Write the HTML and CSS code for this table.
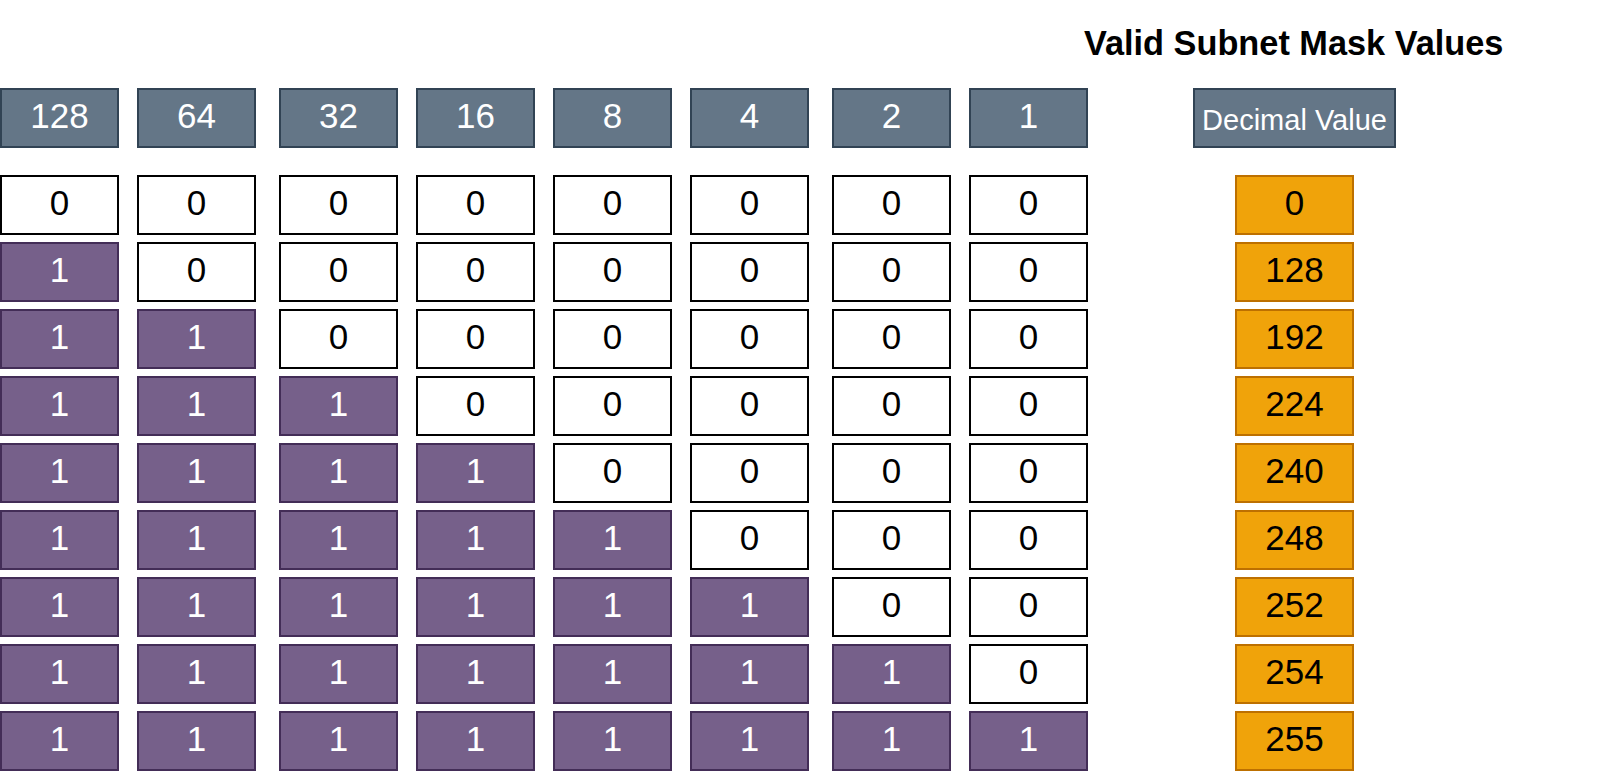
FILE: index.html
```html
<!DOCTYPE html>
<html lang="en">
<head>
<meta charset="utf-8">
<title>Valid Subnet Mask Values</title>
<link rel="stylesheet" href="styles.css">
</head>
<body>
<div class="page">
  <h1 class="title">Valid Subnet Mask Values</h1>
  <div class="grid">
    <div class="cell hdr">128</div>
    <div class="cell hdr">64</div>
    <div class="cell hdr">32</div>
    <div class="cell hdr">16</div>
    <div class="cell hdr">8</div>
    <div class="cell hdr">4</div>
    <div class="cell hdr">2</div>
    <div class="cell hdr">1</div>
    <div class="cell hdr dec-hdr">Decimal Value</div>

    <div class="cell zero">0</div><div class="cell zero">0</div><div class="cell zero">0</div><div class="cell zero">0</div><div class="cell zero">0</div><div class="cell zero">0</div><div class="cell zero">0</div><div class="cell zero">0</div>
    <div class="cell dec">0</div>

    <div class="cell one">1</div><div class="cell zero">0</div><div class="cell zero">0</div><div class="cell zero">0</div><div class="cell zero">0</div><div class="cell zero">0</div><div class="cell zero">0</div><div class="cell zero">0</div>
    <div class="cell dec">128</div>

    <div class="cell one">1</div><div class="cell one">1</div><div class="cell zero">0</div><div class="cell zero">0</div><div class="cell zero">0</div><div class="cell zero">0</div><div class="cell zero">0</div><div class="cell zero">0</div>
    <div class="cell dec">192</div>

    <div class="cell one">1</div><div class="cell one">1</div><div class="cell one">1</div><div class="cell zero">0</div><div class="cell zero">0</div><div class="cell zero">0</div><div class="cell zero">0</div><div class="cell zero">0</div>
    <div class="cell dec">224</div>

    <div class="cell one">1</div><div class="cell one">1</div><div class="cell one">1</div><div class="cell one">1</div><div class="cell zero">0</div><div class="cell zero">0</div><div class="cell zero">0</div><div class="cell zero">0</div>
    <div class="cell dec">240</div>

    <div class="cell one">1</div><div class="cell one">1</div><div class="cell one">1</div><div class="cell one">1</div><div class="cell one">1</div><div class="cell zero">0</div><div class="cell zero">0</div><div class="cell zero">0</div>
    <div class="cell dec">248</div>

    <div class="cell one">1</div><div class="cell one">1</div><div class="cell one">1</div><div class="cell one">1</div><div class="cell one">1</div><div class="cell one">1</div><div class="cell zero">0</div><div class="cell zero">0</div>
    <div class="cell dec">252</div>

    <div class="cell one">1</div><div class="cell one">1</div><div class="cell one">1</div><div class="cell one">1</div><div class="cell one">1</div><div class="cell one">1</div><div class="cell one">1</div><div class="cell zero">0</div>
    <div class="cell dec">254</div>

    <div class="cell one">1</div><div class="cell one">1</div><div class="cell one">1</div><div class="cell one">1</div><div class="cell one">1</div><div class="cell one">1</div><div class="cell one">1</div><div class="cell one">1</div>
    <div class="cell dec">255</div>
  </div>
</div>
</body>
</html>
```
FILE: styles.css
```css
html, body {
  margin: 0;
  padding: 0;
  background: #ffffff;
}

body {
  font-family: "Liberation Sans", Arial, sans-serif;
  overflow: hidden;
}

.page {
  width: 1600px;
  height: 771px;
}

.title {
  margin: 0 0 0 1084px;
  padding-top: 24px;
  font-size: 34.3px;
  line-height: 39px;
  font-weight: bold;
  color: #000000;
  white-space: nowrap;
}

.grid {
  margin-top: 25px;
  display: grid;
  grid-template-columns: 137px 142px 137px 137px 137px 142px 137px 224px 203px;
  grid-template-rows: 80px repeat(9, 60px);
  row-gap: 7px;
}

.cell {
  box-sizing: border-box;
  width: 119px;
  height: 60px;
  display: flex;
  align-items: center;
  justify-content: center;
  padding-bottom: 5px;
  font-size: 35px;
  line-height: 1;
  border: 2px solid #000000;
  align-self: start;
  justify-self: start;
}

.hdr {
  background: #647687;
  border-color: #314354;
  color: #ffffff;
  padding-bottom: 6px;
}

.hdr.dec-hdr {
  width: 203px;
  font-size: 29px;
  padding-top: 5px;
  padding-bottom: 0;
}

.zero {
  background: #ffffff;
  color: #000000;
}

.one {
  background: #76608a;
  border-color: #432d57;
  color: #ffffff;
}

.dec {
  background: #f0a30a;
  border-color: #bd7000;
  color: #000000;
  justify-self: center;
}
```
